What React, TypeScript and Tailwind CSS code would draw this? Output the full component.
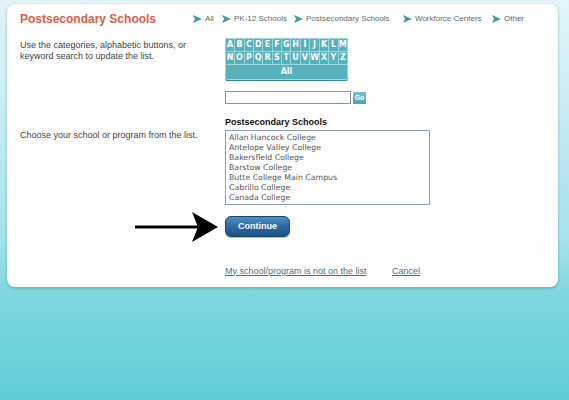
const letters = "ABCDEFGHIJKLMNOPQRSTUVWXYZ".split("");

const schools = [
  "Allan Hancock College",
  "Antelope Valley College",
  "Bakersfield College",
  "Barstow College",
  "Butte College Main Campus",
  "Cabrillo College",
  "Canada College",
];

const navItems = [
  { label: "All", w: "w-[29px]" },
  { label: "PK-12 Schools", w: "w-[72px]" },
  { label: "Postsecondary Schools", w: "w-[109px]" },
  { label: "Workforce Centers", w: "w-[89px]" },
  { label: "Other", w: "w-[40px]" },
];

function NavArrow() {
  return (
    <svg width="9" height="8" viewBox="0 0 9 8" className="shrink-0">
      <path d="M0 0 L9 4 L0 8 L2 4 Z" fill="#3f9ca6" />
    </svg>
  );
}

function BigArrow() {
  return (
    <svg width="84" height="32" viewBox="0 0 84 32">
      <rect x="0" y="14.5" width="64" height="3" fill="#000" />
      <path d="M83 16 L57 1 L63 16 L57 31 Z" fill="#000" />
    </svg>
  );
}

export default function App() {
  return (
    <div className="min-h-[400px] pt-[4px] pl-[7px] bg-[linear-gradient(180deg,#e3f5f8_0px,#a6e2e9_240px,#80d7e0_292px,#5dcdd8_400px)] font-['Liberation_Sans',Arial,sans-serif]">
      <div className="w-[551px] h-[283px] bg-white rounded-[8px] shadow-[0_1px_3px_rgba(0,80,90,0.35)] pl-[13px] pt-[8px]">
        {/* header */}
        <div className="flex items-center h-[14px]">
          <h1 className="w-[173px] text-[12px] leading-[14px] font-bold text-[#e05a44]">
            Postsecondary Schools
          </h1>
          <div className="flex items-center">
            {navItems.map((n) => (
              <div key={n.label} className={`${n.w} flex items-center gap-[3px]`}>
                <NavArrow />
                <span className="text-[8px] leading-[10px] text-[#5c6b70] whitespace-nowrap">
                  {n.label}
                </span>
              </div>
            ))}
          </div>
        </div>

        {/* alphabet + search */}
        <div className="flex mt-[12px]">
          <p className="w-[205px] pt-[1.5px] text-[9px] leading-[11px] text-[#444]">
            Use the categories, alphabetic buttons, or
            <br />
            keyword search to update the list.
          </p>
          <div>
            <div className="w-[123px] rounded-b-[2px] bg-[#9fd6dc] p-px shadow-[0_1px_0_#3c8390] font-['DejaVu_Sans',sans-serif]">
              <div className="grid grid-cols-[repeat(13,1fr)] gap-px">
                {letters.map((l) => (
                  <div
                    key={l}
                    className="h-[12px] bg-[#58b2be] text-white text-[8px] leading-[12px] font-bold text-center"
                  >
                    {l}
                  </div>
                ))}
              </div>
              <div className="mt-px h-[14px] bg-[#58b2be] text-white text-[8px] leading-[14px] font-bold text-center">
                All
              </div>
            </div>
            <div className="flex items-center gap-[2px] mt-[11px]">
              <div className="w-[126px] h-[13px] border border-[#7d98a6] bg-white" />
              <button className="w-[13px] h-[12px] bg-[linear-gradient(180deg,#76c3cd,#4da4b1)] text-white text-[7px] leading-[12px] font-bold text-center">
                Go
              </button>
            </div>
          </div>
        </div>

        {/* list */}
        <div className="flex mt-[13px]">
          <p className="w-[205px] pt-[12.5px] text-[9px] leading-[11px] text-[#444]">
            Choose your school or program from the list.
          </p>
          <div>
            <p className="text-[9px] leading-[11px] font-bold text-[#111]">
              Postsecondary Schools
            </p>
            <div className="mt-[1.5px] w-[205px] h-[75px] border border-[#8aa3b0] pl-[3px] pt-[2px] overflow-hidden font-['DejaVu_Sans',sans-serif]">
              {schools.map((s) => (
                <div key={s} className="text-[7.8px] leading-[10px] text-[#555]">
                  {s}
                </div>
              ))}
            </div>
          </div>
        </div>

        {/* continue */}
        <div className="flex items-center mt-[6px]">
          <div className="w-[205px] flex justify-end pr-[6px]">
            <BigArrow />
          </div>
          <button className="w-[65px] h-[21px] rounded-[6px] border border-[#1b4670] bg-[linear-gradient(180deg,#4b8fc6_0%,#2d6aa3_50%,#1d527f_100%)] shadow-[0_1px_1px_rgba(0,0,0,0.3)] text-white text-[9px] font-bold leading-[19px] text-center">
            Continue
          </button>
        </div>

        {/* links */}
        <div className="flex mt-[22px] pl-[205px] text-[9px] leading-[12px] text-[#4f6f84]">
          <a className="underline w-[167px]">My school/program is not on the list</a>
          <a className="underline">Cancel</a>
        </div>
      </div>
    </div>
  );
}
